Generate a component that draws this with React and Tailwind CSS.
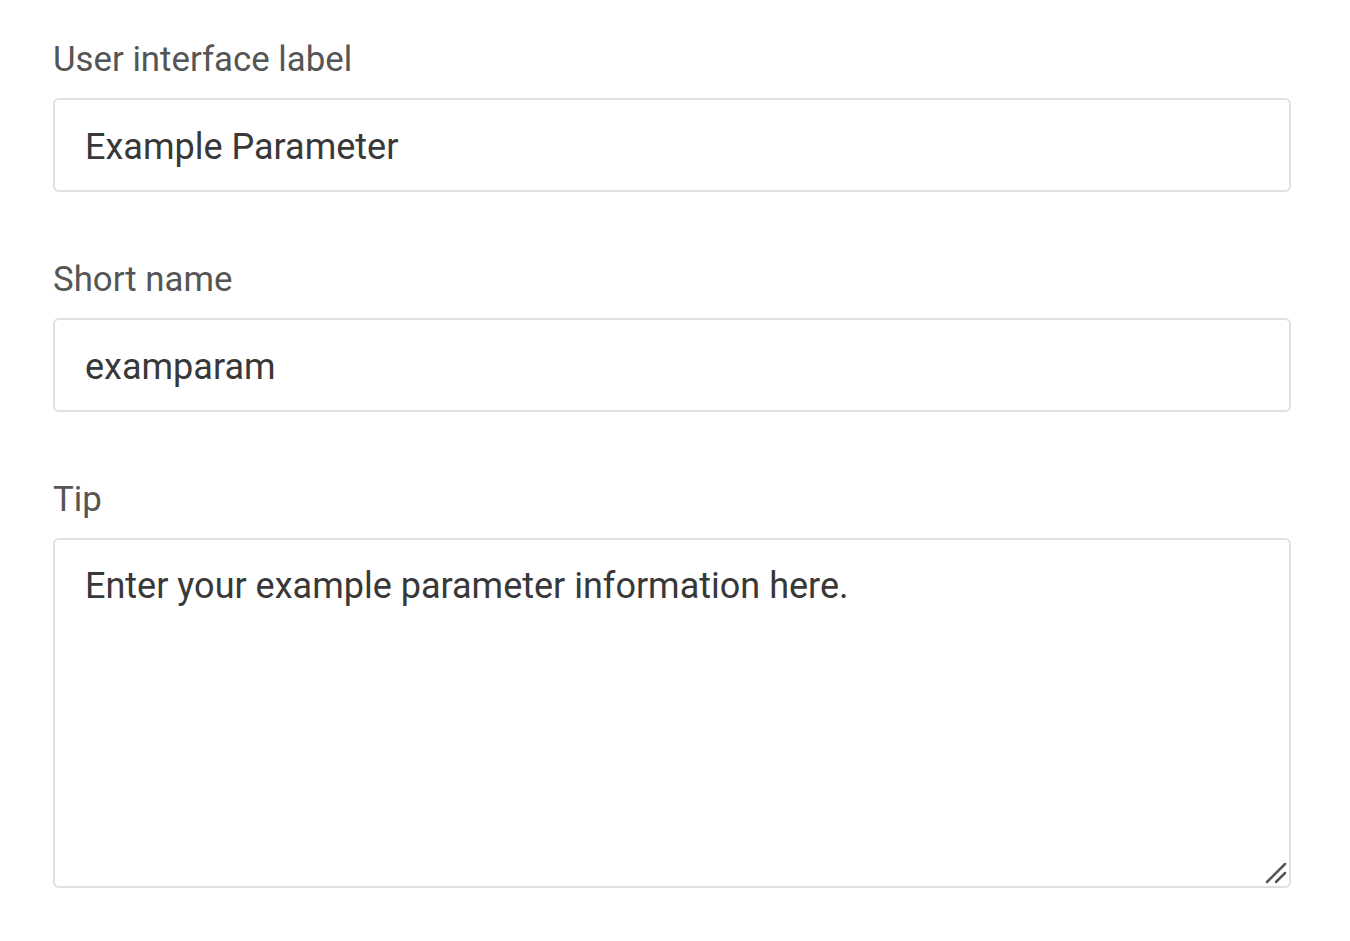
export default function App() {
    return (
        <div className="min-h-screen bg-white pl-[53px] pr-[59px] pt-[37px] font-['Roboto',sans-serif]">
            <div className="flex flex-col gap-[65px]">
                <div className="flex flex-col">
                    <label className="text-[34.8px] leading-[44px] text-[#555] mb-[17px]">User interface label</label>
                    <div className="h-[94px] border-2 border-[#e0e0e0] rounded-[6px] px-[30px] pt-[3px] flex items-center text-[36px] text-[#383838]">
                        Example Parameter
                    </div>
                </div>
                <div className="flex flex-col">
                    <label className="text-[34.8px] leading-[44px] text-[#555] mb-[17px]">Short name</label>
                    <div className="h-[94px] border-2 border-[#e0e0e0] rounded-[6px] px-[30px] pt-[3px] flex items-center text-[36px] text-[#383838]">
                        examparam
                    </div>
                </div>
                <div className="flex flex-col">
                    <label className="text-[34.8px] leading-[44px] text-[#555] mb-[17px]">Tip</label>
                    <div className="relative h-[350px] border-2 border-[#e0e0e0] rounded-[6px] px-[30px] pt-[24px] text-[36px] leading-[44px] text-[#383838]">
                        Enter your example parameter information here.
                        <svg className="absolute right-[2px] bottom-[2px]" width="22" height="22" viewBox="0 0 22 22">
                            <path d="M2 20 L20 2" stroke="#555" strokeWidth="2.5" strokeLinecap="round" />
                            <path d="M11 20 L20 11" stroke="#555" strokeWidth="2.5" strokeLinecap="round" />
                        </svg>
                    </div>
                </div>
            </div>
        </div>
    );
}
